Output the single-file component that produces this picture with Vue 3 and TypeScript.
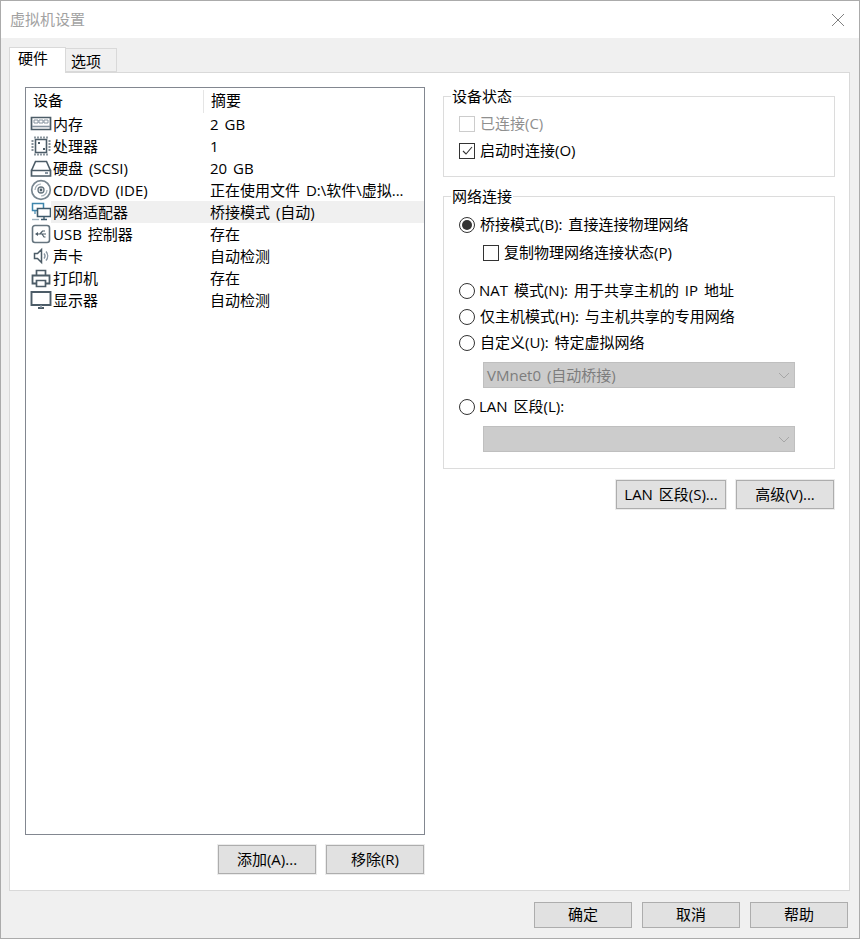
<script setup lang="ts">
interface Shape { d: string; fill?: string; stroke?: string; width?: number }
interface Device { name: string; summary: string; shapes: Shape[]; selected?: boolean }

const S = '#4c5c67'
const L = '#8794a0'
const B = '#3f86ad'

const devices: Device[] = [
  { name: '内存', summary: '2 GB', shapes: [
    { d: 'M1.5 4.5h19v12h-19z', width: 1.7 },
    { d: 'M4 7h4v3H4zM9 7h4v3H9zM14 7h4v3h-4z', stroke: L, width: 1 },
    { d: 'M2 13.5h18', stroke: L, width: 1.6 },
  ] },
  { name: '处理器', summary: '1', shapes: [
    { d: 'M5.5 4.5h11v13h-11z', width: 1.6 },
    { d: 'M5 1.5v2M8 1.5v2M11 1.5v2M14 1.5v2M17 1.5v2M5 18.5v2M8 18.5v2M11 18.5v2M14 18.5v2M17 18.5v2M1.5 6h2M1.5 9h2M1.5 12h2M1.5 15h2M18.5 6h2M18.5 9h2M18.5 12h2M18.5 15h2', stroke: '#5f6e79', width: 1.4 },
    { d: 'M8 7h2v2H8zM13 13h2v2h-2z', fill: S, stroke: 'none' },
  ] },
  { name: '硬盘 (SCSI)', summary: '20 GB', shapes: [
    { d: 'M1.5 13.5 5.5 4.5h11l4 9', width: 1.6 },
    { d: 'M1.5 13.5h19v5.5h-19z', width: 1.7 },
    { d: 'M15 15h3v2h-3z', fill: L, stroke: 'none' },
  ] },
  { name: 'CD/DVD (IDE)', summary: '正在使用文件 D:\\软件\\虚拟...', shapes: [
    { d: 'M11 1.7a9.3 9.3 0 1 0 0 18.6a9.3 9.3 0 1 0 0-18.6z', width: 1.7, stroke: '#77858f' },
    { d: 'M11 8a3 3 0 1 0 0 6a3 3 0 1 0 0-6z', width: 1.3, stroke: '#66757f' },
    { d: 'M11 10.2a.8.8 0 1 0 0 1.6a.8.8 0 1 0 0-1.6z', fill: S },
    { d: 'M5 11a6 6 0 0 1 6-6M17 11a6 6 0 0 1-6 6', stroke: '#a3afb7', width: 1.2 },
  ] },
  { name: '网络适配器', summary: '桥接模式 (自动)', selected: true, shapes: [
    { d: 'M2.5 2.5h11v7h-11z', stroke: B, width: 1.5 },
    { d: 'M7.5 7.5h13v8h-13z', fill: '#ffffff', stroke: '#3d5a6c', width: 1.6 },
    { d: 'M14 15.5v2.5M11 18.5h6', stroke: '#3d5a6c', width: 1.4 },
    { d: 'M5 10v3', stroke: B, width: 1.2 },
    { d: 'M2 18.5h7', stroke: '#9fb2bf', width: 1.4 },
  ] },
  { name: 'USB 控制器', summary: '存在', shapes: [
    { d: 'M5 2.5h12a2.5 2.5 0 0 1 2.5 2.5v12a2.5 2.5 0 0 1-2.5 2.5H5A2.5 2.5 0 0 1 2.5 17V5A2.5 2.5 0 0 1 5 2.5z', width: 1.6, stroke: '#66757f' },
    { d: 'M7 11h9M10 11l2.5-3H15M12 11l2 3h1.5', width: 1.2 },
    { d: 'M8 9 5 11l3 2z', fill: S, stroke: 'none' },
  ] },
  { name: '声卡', summary: '自动检测', shapes: [
    { d: 'M4.5 8.5h3l4-4v13l-4-4h-3z', width: 1.5 },
    { d: 'M14 8.5a4 4 0 0 1 0 5M16 6.5a7 7 0 0 1 0 9', stroke: L, width: 1.4 },
  ] },
  { name: '打印机', summary: '存在', shapes: [
    { d: 'M6.5 8.5v-5h9v5', width: 1.7 },
    { d: 'M6.5 16.5h-4v-8h17v8h-4', width: 1.8 },
    { d: 'M6.5 13.5h9v6h-9z', width: 1.7 },
  ] },
  { name: '显示器', summary: '自动检测', shapes: [
    { d: 'M1.5 3h19v13h-19z', width: 1.9 },
    { d: 'M8 19h6', width: 2 },
    { d: 'M11 16v3', width: 1.5, stroke: L },
  ] },
]
</script>

<template>
  <div class="window">
    <header class="titlebar">
      <span class="title">虚拟机设置</span>
      <svg class="close" width="14" height="14" viewBox="0 0 14 14">
        <path d="M1 1l12 12M13 1 1 13" stroke="#808080" fill="none" />
      </svg>
    </header>

    <main class="body">
      <div class="tabs">
        <div class="tab active">硬件</div>
        <div class="tab">选项</div>
      </div>

      <section class="panel">
        <div class="left">
          <div class="list">
            <div class="list-head">
              <span class="col-name">设备</span>
              <span class="col-summary">摘要</span>
            </div>
            <div v-for="d in devices" :key="d.name" class="row" :class="{ selected: d.selected }">
              <svg class="icon" width="22" height="22" viewBox="0 0 22 22">
                <path
                  v-for="(s, i) in d.shapes"
                  :key="i"
                  :d="s.d"
                  :fill="s.fill ?? 'none'"
                  :stroke="s.stroke ?? S"
                  :stroke-width="s.width ?? 1.2"
                />
              </svg>
              <div class="row-body">
                <span class="row-name">{{ d.name }}</span>
                <span class="row-summary">{{ d.summary }}</span>
              </div>
            </div>
          </div>
          <div class="list-actions">
            <button class="btn tall">添加(A)...</button>
            <button class="btn tall">移除(R)</button>
          </div>
        </div>

        <div class="right">
          <fieldset class="group status">
            <span class="legend">设备状态</span>
            <label class="opt disabled"><span class="check"></span>已连接(C)</label>
            <label class="opt">
              <span class="check on">
                <svg width="11" height="10" viewBox="0 0 11 10"><path d="M1 5l3 3 6-7" fill="none" stroke="#333" stroke-width="1.1" /></svg>
              </span>启动时连接(O)
            </label>
          </fieldset>

          <fieldset class="group network">
            <span class="legend">网络连接</span>
            <label class="opt"><span class="radio on"></span>桥接模式(B): 直接连接物理网络</label>
            <label class="opt sub"><span class="check"></span>复制物理网络连接状态(P)</label>
            <label class="opt nat"><span class="radio"></span>NAT 模式(N): 用于共享主机的 IP 地址</label>
            <label class="opt"><span class="radio"></span>仅主机模式(H): 与主机共享的专用网络</label>
            <label class="opt"><span class="radio"></span>自定义(U): 特定虚拟网络</label>
            <div class="select">
              <span>VMnet0 (自动桥接)</span>
              <svg width="12" height="7" viewBox="0 0 12 7"><path d="M1 1l5 5 5-5" fill="none" stroke="#a6a6a6" /></svg>
            </div>
            <label class="opt lan"><span class="radio"></span>LAN 区段(L):</label>
            <div class="select">
              <span></span>
              <svg width="12" height="7" viewBox="0 0 12 7"><path d="M1 1l5 5 5-5" fill="none" stroke="#a6a6a6" /></svg>
            </div>
          </fieldset>

          <div class="net-actions">
            <button class="btn tall lan-btn">LAN 区段(S)...</button>
            <button class="btn tall adv-btn">高级(V)...</button>
          </div>
        </div>
      </section>

      <footer class="footer">
        <button class="btn">确定</button>
        <button class="btn">取消</button>
        <button class="btn">帮助</button>
      </footer>
    </main>
  </div>
</template>

<style scoped>
.window {
  box-sizing: border-box;
  width: 860px;
  height: 939px;
  display: flex;
  flex-direction: column;
  border: 1px solid #ababab;
  background: #f0f0f0;
  color: #000;
  font-family: "Open Sans", "Noto Sans CJK SC", sans-serif;
  font-size: 15px;
  line-height: 20px;
  word-spacing: 2px;
}
.titlebar {
  box-sizing: border-box;
  height: 37px;
  flex: none;
  display: flex;
  align-items: center;
  justify-content: space-between;
  background: #fff;
  padding: 0 14px 2px 9px;
}
.close { margin-top: 2px; }
.title { color: #a2a2a2; }
.body {
  flex: 1;
  display: flex;
  flex-direction: column;
  padding: 9px 9px 0 8px;
}
.tabs { display: flex; align-items: flex-end; height: 26px; margin-bottom: -1px; position: relative; z-index: 1; }
.tab {
  box-sizing: border-box;
  width: 51px;
  height: 24px;
  margin-bottom: 1px;
  padding: 2px 0 0 5px;
  background: #f0f0f0;
  border: 1px solid #d9d9d9;
  border-left: none;
}
.tab.active {
  width: 57px;
  height: 26px;
  margin-bottom: 0;
  padding: 0 0 0 8px;
  background: #fff;
  border: 1px solid #d9d9d9;
  border-bottom: none;
}
.panel {
  box-sizing: border-box;
  width: 841px;
  height: 819px;
  flex: none;
  display: flex;
  gap: 18px;
  padding: 14px 0 0 15px;
  background: #fff;
  border: 1px solid #d9d9d9;
}
.left { width: 400px; flex: none; }
.list {
  box-sizing: border-box;
  height: 748px;
  border: 1px solid #828790;
  background: #fff;
}
.list-head {
  display: flex;
  height: 25px;
  box-sizing: border-box;
  padding-top: 2px;
}
.col-name { box-sizing: border-box; width: 178px; padding-left: 7px; border-right: 1px solid #e5e5e5; height: 23px; }
.col-summary { padding-left: 7px; }
.row { display: flex; height: 22px; align-items: stretch; }
.icon { margin-left: 4px; flex: none; }
.row-body { flex: 1; display: flex; align-items: center; margin-left: -1px; padding-left: 2px; box-sizing: border-box; }
.selected .row-body { background: #f0f0f0; }
.row-name { width: 157px; flex: none; }
.row-summary { white-space: nowrap; }
.list-actions, .net-actions {
  display: flex;
  justify-content: flex-end;
  gap: 10px;
  margin-top: 10px;
  padding-right: 1px;
}
.btn {
  box-sizing: border-box;
  width: 98px;
  height: 26px;
  padding: 0 0 2px;
  border: 1px solid #adadad;
  background: #e1e1e1;
  color: #000;
  font: inherit;
  word-spacing: inherit;
}
.btn.tall { height: 29px; box-shadow: 0 0 0 1px #ececec; }
.lan-btn { width: 110px; }
.right { width: 392px; flex: none; margin-top: 9px; }
.group {
  position: relative;
  box-sizing: border-box;
  width: 392px;
  margin: 0;
  border: 1px solid #dcdcdc;
  display: flex;
  flex-direction: column;
}
.legend {
  position: absolute;
  left: 7px;
  top: -11px;
  padding: 0 1px;
  background: #fff;
}
.status { height: 81px; padding: 14px 0 0 15px; gap: 1px; }
.network { height: 273px; margin-top: 19px; padding: 15px 0 0 15px; }
.opt {
  box-sizing: border-box;
  display: flex;
  align-items: center;
  height: 26px;
  padding-bottom: 2px;
  gap: 5px;
}
.opt.disabled { color: #8f8f8f; }
.opt.sub { margin: 2px 0 0 24px; }
.opt.nat { margin-top: 12px; gap: 4px; }
.opt.lan { margin-top: 6px; gap: 4px; }
.check {
  box-sizing: border-box;
  width: 16px;
  height: 16px;
  flex: none;
  margin-top: 2px;
  border: 1px solid #333;
  display: flex;
  align-items: center;
  justify-content: center;
  background: #fff;
}
.disabled .check { border-color: #cccccc; }
.radio {
  box-sizing: border-box;
  position: relative;
  width: 16px;
  height: 16px;
  flex: none;
  margin-top: 2px;
  border: 1px solid #333;
  border-radius: 50%;
  background: #fff;
}
.radio.on::after {
  content: "";
  position: absolute;
  inset: 2px;
  border-radius: 50%;
  background: #333;
}
.select {
  box-sizing: border-box;
  width: 312px;
  height: 26px;
  margin: 6px 0 0 24px;
  padding: 0 4px 0 3px;
  display: flex;
  align-items: center;
  justify-content: space-between;
  background: #cccccc;
  border: 1px solid #bfbfbf;
  color: #7d7d7d;
}
.select span { margin-top: -1px; }
.net-actions { margin-top: 11px; }
.footer {
  display: flex;
  justify-content: flex-end;
  gap: 10px;
  margin-top: 11px;
  padding-right: 2px;
}
</style>
